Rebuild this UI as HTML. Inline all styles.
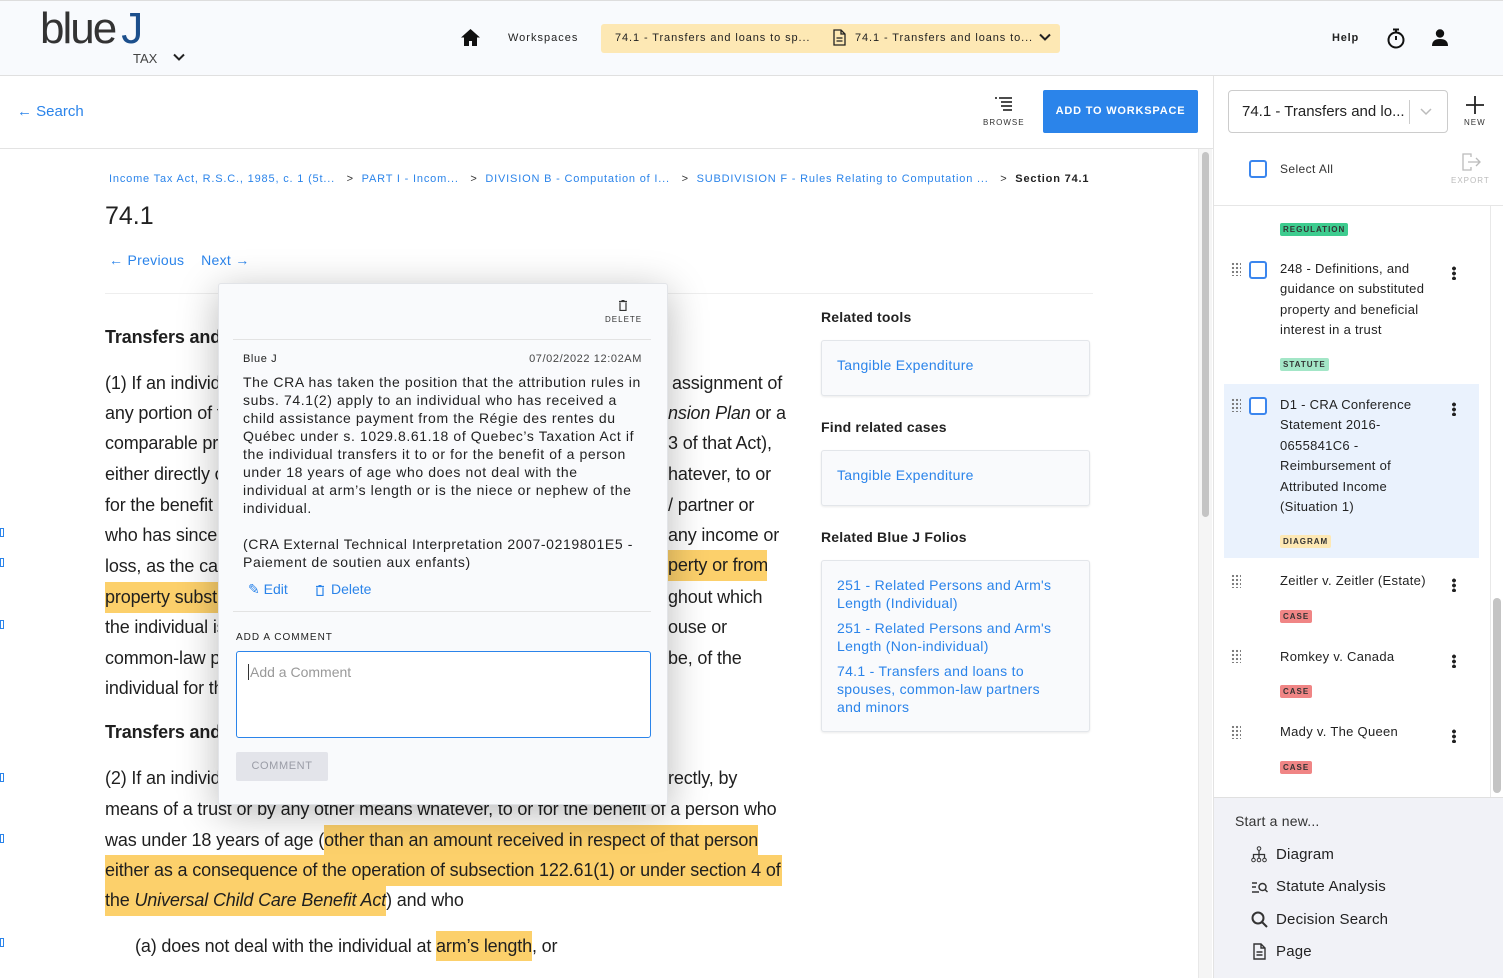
<!DOCTYPE html>
<html><head><meta charset="utf-8">
<style>
*{box-sizing:border-box;margin:0;padding:0}
body{width:1503px;height:978px;overflow:hidden;background:#fff;font-family:"Liberation Sans",Arial,sans-serif;color:#1f2328;position:relative}
.a{position:absolute;white-space:nowrap}
.blue{color:#2b84ea}
.t{font-size:18px;color:#1f1f1f;letter-spacing:-0.15px}
.hl{background:#fcd06b}
.tag{position:absolute;font-size:8px;font-weight:bold;letter-spacing:1px;padding:2px 3px;border-radius:2px;color:#333}
.dots{position:absolute;width:10px;height:14px;background-image:radial-gradient(circle,#777 1px,transparent 1.3px);background-size:4px 4px}
.kebab{position:absolute;width:4px;height:14px;background-image:radial-gradient(circle,#222 1.8px,transparent 2px);background-size:4px 5px}
.cb{position:absolute;width:18px;height:18px;border:2px solid #3b86ee;border-radius:3px;background:#fff}
.item{position:absolute;left:1280px;font-size:13px;line-height:20.4px;color:#222;width:165px;letter-spacing:.3px}
.card{position:absolute;left:821px;width:269px;border:1px solid #e3e6ea;border-radius:3px;background:#f9fafc;box-shadow:0 1px 2px rgba(0,0,0,.08)}
</style></head><body>

<div class="a" style="left:0;top:0;width:1503px;height:76px;background:#f8fafd;border-top:1px solid #ddd;border-bottom:1px solid #e0e0e0"></div>
<div class="a" style="left:40px;top:4px;font-size:44px;letter-spacing:-2px;color:#333;font-weight:normal">blue<span style="color:#1c4f8c;margin-left:6px">J</span></div>
<div class="a" style="left:133px;top:51px;font-size:13px;color:#444">TAX</div>
<svg class="a" style="left:173px;top:53px" width="12" height="9" viewBox="0 0 12 9"><path d="M1 1.5l5 5 5-5" stroke="#222" stroke-width="2" fill="none"/></svg>
<svg class="a" style="left:461px;top:29px" width="19" height="17" viewBox="0 0 19 17"><path d="M9.5 0L0 8.5h3V17h5v-5h3v5h5V8.5h3z" fill="#111"/></svg>
<div class="a" style="left:508px;top:32px;font-size:11px;letter-spacing:1px;color:#222">Workspaces</div>
<div class="a" style="left:601px;top:24px;width:459px;height:29px;background:#fde8b4;border-radius:3px"></div>
<div class="a" style="left:615px;top:32px;font-size:11px;letter-spacing:.9px;color:#222">74.1 - Transfers and loans to sp...</div>
<svg class="a" style="left:833px;top:29px" width="13" height="17" viewBox="0 0 13 17"><path d="M1 1h7l4 4v11H1z M8 1v4h4 M3.5 9h6 M3.5 12h6" stroke="#222" stroke-width="1.3" fill="none"/></svg>
<div class="a" style="left:855px;top:32px;font-size:11px;letter-spacing:.9px;color:#222">74.1 - Transfers and loans to...</div>
<svg class="a" style="left:1039px;top:33px" width="12" height="9" viewBox="0 0 12 9"><path d="M1 1.5l5 5 5-5" stroke="#222" stroke-width="2" fill="none"/></svg>
<div class="a" style="left:1332px;top:32px;font-size:11px;font-weight:bold;letter-spacing:.8px;color:#222">Help</div>
<svg class="a" style="left:1386px;top:28px" width="20" height="21" viewBox="0 0 20 21"><circle cx="10" cy="12" r="7.5" stroke="#111" stroke-width="2" fill="none"/><path d="M7 1.5h6 M10 2v3 M10 12V8" stroke="#111" stroke-width="2"/></svg>
<svg class="a" style="left:1431px;top:29px" width="18" height="17" viewBox="0 0 18 17"><circle cx="9" cy="4.5" r="4.2" fill="#111"/><path d="M1 17c0-5 3-7 8-7s8 2 8 7z" fill="#111"/></svg>

<div class="a" style="left:0;top:148px;width:1214px;height:1px;background:#e3e3e3"></div>
<div class="a blue" style="left:17px;top:103px;font-size:15px">← Search</div>
<svg class="a" style="left:994px;top:97px" width="20" height="14" viewBox="0 0 20 14"><path d="M1 1h2 M5 1h13 M7 5h11 M7 9h11 M9 13h9" stroke="#333" stroke-width="1.8"/></svg>
<div class="a" style="left:983px;top:118px;font-size:8px;letter-spacing:1px;color:#333">BROWSE</div>
<div class="a" style="left:1043px;top:90px;width:155px;height:43px;background:#2b84ea;border-radius:2px;color:#fff;font-size:11px;font-weight:bold;letter-spacing:.8px;text-align:center;line-height:43px">ADD TO WORKSPACE</div>

<div class="a" style="left:1213px;top:76px;width:1px;height:902px;background:#e3e3e3"></div>
<div class="a" style="left:1228px;top:90px;width:220px;height:43px;border:1px solid #ccc;border-radius:4px;background:#fff"></div>
<div class="a" style="left:1242px;top:103px;font-size:15px;color:#222">74.1 - Transfers and lo...</div>
<div class="a" style="left:1409px;top:100px;width:1px;height:24px;background:#ccc"></div>
<svg class="a" style="left:1420px;top:108px" width="12" height="8" viewBox="0 0 12 8"><path d="M1 1l5 5 5-5" stroke="#bbb" stroke-width="1.5" fill="none"/></svg>
<svg class="a" style="left:1465px;top:95px" width="20" height="20" viewBox="0 0 20 20"><path d="M10 1v18 M1 10h18" stroke="#222" stroke-width="1.8"/></svg>
<div class="a" style="left:1464px;top:118px;font-size:8px;letter-spacing:1px;color:#333">NEW</div>
<div class="cb" style="left:1249px;top:160px"></div>
<div class="a" style="left:1280px;top:162px;font-size:12px;color:#333;letter-spacing:.4px">Select All</div>
<svg class="a" style="left:1461px;top:153px" width="20" height="18" viewBox="0 0 20 18"><path d="M10 4V1H2v16h8v-3 M7 9h12 M15 5l4 4-4 4" stroke="#bbb" stroke-width="1.3" fill="none"/></svg>
<div class="a" style="left:1451px;top:176px;font-size:8px;letter-spacing:1px;color:#bbb">EXPORT</div>
<div class="a" style="left:1214px;top:205px;width:289px;height:1px;background:#e6e6e6"></div>
<div class="a" style="left:1490px;top:206px;width:1px;height:592px;background:#e8e8e8"></div>
<div class="a" style="left:1493px;top:598px;width:8px;height:195px;background:#c4c4c4;border-radius:4px"></div>

<div class="tag" style="left:1280px;top:223px;background:#3ecc8f">REGULATION</div>
<div class="dots" style="left:1231px;top:262px"></div>
<div class="cb" style="left:1249px;top:261px"></div>
<div class="item" style="top:259px">248 - Definitions, and guidance on substituted property and beneficial interest in a trust</div>
<div class="kebab" style="left:1452px;top:266px"></div>
<div class="tag" style="left:1280px;top:358px;background:#a3e6c7">STATUTE</div>

<div class="a" style="left:1224px;top:384px;width:255px;height:174px;background:#eaf2fd"></div>
<div class="dots" style="left:1231px;top:398px"></div>
<div class="cb" style="left:1249px;top:397px"></div>
<div class="item" style="top:395px">D1 - CRA Conference Statement 2016-0655841C6 - Reimbursement of Attributed Income (Situation 1)</div>
<div class="kebab" style="left:1452px;top:402px"></div>
<div class="tag" style="left:1280px;top:535px;background:#fde8b4">DIAGRAM</div>

<div class="dots" style="left:1231px;top:574px"></div>
<div class="item" style="top:571px">Zeitler v. Zeitler (Estate)</div>
<div class="kebab" style="left:1452px;top:578px"></div>
<div class="tag" style="left:1280px;top:610px;background:#f08585">CASE</div>
<div class="dots" style="left:1231px;top:649px"></div>
<div class="item" style="top:647px">Romkey v. Canada</div>
<div class="kebab" style="left:1452px;top:654px"></div>
<div class="tag" style="left:1280px;top:685px;background:#f08585">CASE</div>
<div class="dots" style="left:1231px;top:725px"></div>
<div class="item" style="top:722px">Mady v. The Queen</div>
<div class="kebab" style="left:1452px;top:729px"></div>
<div class="tag" style="left:1280px;top:761px;background:#f08585">CASE</div>

<div class="a" style="left:1214px;top:797px;width:289px;height:181px;background:#f1f2f7;border-top:1px solid #e0e0e0"></div>
<div class="a" style="left:1235px;top:813px;font-size:14px;color:#333;letter-spacing:.2px">Start a new...</div>
<svg class="a" style="left:1251px;top:846px" width="16" height="17" viewBox="0 0 16 17"><circle cx="8" cy="2.5" r="1.8" stroke="#333" fill="none"/><path d="M8 4.5v4 M2.5 12V8.5h11V12 M8 8.5V12" stroke="#333" stroke-width="1.3" fill="none"/><circle cx="2.5" cy="14" r="1.8" stroke="#333" fill="none"/><circle cx="8" cy="14" r="1.8" stroke="#333" fill="none"/><circle cx="13.5" cy="14" r="1.8" stroke="#333" fill="none"/></svg>
<div class="a" style="left:1276px;top:846px;font-size:15px;color:#222;letter-spacing:.2px">Diagram</div>
<svg class="a" style="left:1251px;top:880px" width="17" height="14" viewBox="0 0 17 14"><path d="M1 3h5 M1 7h4 M1 12h7" stroke="#333" stroke-width="1.5"/><circle cx="11.5" cy="7" r="3.5" stroke="#333" stroke-width="1.5" fill="none"/><path d="M14 9.5l2.5 2.5" stroke="#333" stroke-width="1.5"/></svg>
<div class="a" style="left:1276px;top:878px;font-size:15px;color:#222;letter-spacing:.2px">Statute Analysis</div>
<svg class="a" style="left:1251px;top:911px" width="17" height="17" viewBox="0 0 17 17"><circle cx="7" cy="7" r="5.5" stroke="#333" stroke-width="2" fill="none"/><path d="M11 11l5 5" stroke="#333" stroke-width="2"/></svg>
<div class="a" style="left:1276px;top:911px;font-size:15px;color:#222;letter-spacing:.2px">Decision Search</div>
<svg class="a" style="left:1253px;top:943px" width="13" height="17" viewBox="0 0 13 17"><path d="M1 1h7l4 4v11H1z M8 1v4h4 M3.5 9h6 M3.5 12h6" stroke="#333" stroke-width="1.4" fill="none"/></svg>
<div class="a" style="left:1276px;top:943px;font-size:15px;color:#222;letter-spacing:.2px">Page</div>

<div class="a" style="left:1198px;top:149px;width:14px;height:829px;background:#f5f5f5;border-left:1px solid #e8e8e8"></div>
<div class="a" style="left:1202px;top:152px;width:7px;height:365px;background:#c4c4c4;border-radius:4px"></div>

<div class="a" style="left:109px;top:173px;font-size:11px;letter-spacing:.82px;color:#2b84ea">Income Tax Act, R.S.C., 1985, c. 1 (5t...&nbsp;&nbsp;&nbsp;<span style="color:#333">&gt;</span>&nbsp;&nbsp;PART I - Incom...&nbsp;&nbsp;&nbsp;<span style="color:#333">&gt;</span>&nbsp;&nbsp;DIVISION B - Computation of I...&nbsp;&nbsp;&nbsp;<span style="color:#333">&gt;</span>&nbsp;&nbsp;SUBDIVISION F - Rules Relating to Computation ...&nbsp;&nbsp;&nbsp;<span style="color:#333">&gt;</span>&nbsp;&nbsp;<b style="color:#222">Section 74.1</b></div>
<div class="a" style="left:105px;top:202px;font-size:25px;color:#222">74.1</div>
<div class="a blue" style="left:109px;top:252px;font-size:14px;letter-spacing:.3px">← Previous&nbsp;&nbsp;&nbsp;&nbsp;Next →</div>
<div class="a" style="left:105px;top:293px;width:988px;height:1px;background:#eee"></div>

<div class="a" style="left:0;top:528px;width:4px;height:9px;border:1px solid #2b84ea"></div>
<div class="a" style="left:0;top:558px;width:4px;height:9px;border:1px solid #2b84ea"></div>
<div class="a" style="left:0;top:620px;width:4px;height:9px;border:1px solid #2b84ea"></div>
<div class="a" style="left:0;top:773px;width:4px;height:9px;border:1px solid #2b84ea"></div>
<div class="a" style="left:0;top:834px;width:4px;height:9px;border:1px solid #2b84ea"></div>
<div class="a" style="left:0;top:938px;width:4px;height:9px;border:1px solid #2b84ea"></div>

<div class="a t" style="left:105px;top:327px;font-weight:bold;font-size:18px">Transfers and loans to spouse</div>
<div class="a t" style="left:105px;top:373px">(1) If an individual has transferred</div>
<div class="a t" style="left:105px;top:403px">any portion of the</div>
<div class="a t" style="left:105px;top:433px">comparable provision</div>
<div class="a t" style="left:105px;top:464px">either directly or</div>
<div class="a t" style="left:105px;top:495px">for the benefit of</div>
<div class="a t" style="left:105px;top:525px">who has since become</div>
<div class="a t" style="left:105px;top:556px">loss, as the case may</div>
<div class="a t hl" style="left:105px;top:582px;height:31px;line-height:31px;padding-right:10px">property substituted</div>
<div class="a t" style="left:105px;top:617px">the individual is</div>
<div class="a t" style="left:105px;top:648px">common-law partner</div>
<div class="a t" style="left:105px;top:678px">individual for the</div>
<div class="a t" style="left:105px;top:722px;font-weight:bold">Transfers and loans to minors</div>
<div class="a t" style="left:105px;top:768px">(2) If an individual has transferred</div>

<div class="a t" style="left:672px;top:373px">assignment of</div>
<div class="a t" style="left:668px;top:403px"><i>nsion Plan</i> or a</div>
<div class="a t" style="left:668px;top:433px">3 of that Act),</div>
<div class="a t" style="left:668px;top:464px">hatever, to or</div>
<div class="a t" style="left:668px;top:495px">/ partner or</div>
<div class="a t" style="left:668px;top:525px">any income or</div>
<div class="a t hl" style="left:668px;top:550px;height:31px;line-height:31px;width:99px;overflow:hidden">perty or from</div>
<div class="a t" style="left:668px;top:587px">ghout which</div>
<div class="a t" style="left:668px;top:617px">ouse or</div>
<div class="a t" style="left:668px;top:648px">be, of the</div>
<div class="a t" style="left:668px;top:768px">rectly, by</div>

<div class="a t" style="left:105px;top:799px">means of a trust or by any other means whatever, to or for the benefit of a person who</div>
<div class="a t" style="left:105px;top:830px">was under 18 years of age (<span class="hl" style="padding:5px 0">other than an amount received in respect of that person</span></div>
<div class="a t hl" style="left:105px;top:855px;height:31px;line-height:31px;width:677px">either as a consequence of the operation of subsection 122.61(1) or under section 4 of</div>
<div class="a t" style="left:105px;top:885px;line-height:31px"><span class="hl" style="display:inline-block;height:31px">the <i>Universal Child Care Benefit Act</i></span>) and who</div>
<div class="a t" style="left:135px;top:936px">(a) does not deal with the individual at <span class="hl" style="padding:5px 0">arm’s length</span>, or</div>

<div class="a" style="left:821px;top:309px;font-size:14px;font-weight:bold;color:#222;letter-spacing:.2px">Related tools</div>
<div class="card" style="top:340px;height:56px"></div>
<div class="a blue" style="left:837px;top:357px;font-size:14px;letter-spacing:.3px">Tangible Expenditure</div>
<div class="a" style="left:821px;top:419px;font-size:14px;font-weight:bold;color:#222;letter-spacing:.2px">Find related cases</div>
<div class="card" style="top:450px;height:56px"></div>
<div class="a blue" style="left:837px;top:467px;font-size:14px;letter-spacing:.3px">Tangible Expenditure</div>
<div class="a" style="left:821px;top:529px;font-size:14px;font-weight:bold;color:#222;letter-spacing:.2px">Related Blue J Folios</div>
<div class="card" style="top:560px;height:172px"></div>
<div class="a blue" style="left:837px;top:576px;font-size:14px;line-height:18px;white-space:normal;width:230px;letter-spacing:.3px">251 - Related Persons and Arm's Length (Individual)</div>
<div class="a blue" style="left:837px;top:619px;font-size:14px;line-height:18px;white-space:normal;width:230px;letter-spacing:.3px">251 - Related Persons and Arm's Length (Non-individual)</div>
<div class="a blue" style="left:837px;top:662px;font-size:14px;line-height:18px;white-space:normal;width:230px;letter-spacing:.3px">74.1 - Transfers and loans to spouses, common-law partners and minors</div>

<div class="a" style="left:218px;top:283px;width:450px;height:522px;background:#f9fafc;border:1px solid #e2e4e8;border-radius:3px;box-shadow:0 8px 40px rgba(0,0,0,.28)">
  <svg class="a" style="left:400px;top:16px" width="8" height="11" viewBox="0 0 8 11"><path d="M0 1.5h8 M2.5 0.5h3 M1 2.5v8h6v-8" stroke="#333" stroke-width="1.2" fill="none"/></svg>
  <div class="a" style="left:386px;top:31px;font-size:8px;letter-spacing:1px;color:#333">DELETE</div>
  <div class="a" style="left:14px;top:55px;width:418px;height:1px;background:#e3e3e3"></div>
  <div class="a" style="left:24px;top:69px;font-size:11px;letter-spacing:.6px;color:#222">Blue J</div>
  <div class="a" style="right:25px;top:69px;font-size:11px;letter-spacing:.6px;color:#444">07/02/2022 12:02AM</div>
  <div class="a" style="left:24px;top:89px;font-size:14px;line-height:18px;color:#222;letter-spacing:.6px">The CRA has taken the position that the attribution rules in<br>subs. 74.1(2) apply to an individual who has received a<br>child assistance payment from the Régie des rentes du<br>Québec under s. 1029.8.61.18 of Quebec’s Taxation Act if<br>the individual transfers it to or for the benefit of a person<br>under 18 years of age who does not deal with the<br>individual at arm’s length or is the niece or nephew of the<br>individual.<br><br>(CRA External Technical Interpretation 2007-0219801E5 -<br>Paiement de soutien aux enfants)</div>
  <div class="a blue" style="left:29px;top:297px;font-size:14px">✎ Edit</div>
  <svg class="a" style="left:97px;top:301px" width="8" height="11" viewBox="0 0 8 11"><path d="M0 1.5h8 M2.5 0.5h3 M1 2.5v8h6v-8" stroke="#2b84ea" stroke-width="1.2" fill="none"/></svg>
  <div class="a blue" style="left:112px;top:297px;font-size:14px">Delete</div>
  <div class="a" style="left:14px;top:327px;width:418px;height:1px;background:#e3e3e3"></div>
  <div class="a" style="left:17px;top:348px;font-size:10px;letter-spacing:1px;color:#222">ADD A COMMENT</div>
  <div class="a" style="left:17px;top:367px;width:415px;height:87px;border:1px solid #2b84ea;border-radius:3px;background:#fff"></div>
  <div class="a" style="left:29px;top:380px;font-size:14px;color:#999;border-left:1px solid #333;padding-left:1px">Add a Comment</div>
  <div class="a" style="left:17px;top:468px;width:92px;height:29px;background:#e3e4ea;border-radius:2px;font-size:11px;color:#9a9ca6;letter-spacing:.6px;text-align:center;line-height:29px">COMMENT</div>
</div>
</body></html>
